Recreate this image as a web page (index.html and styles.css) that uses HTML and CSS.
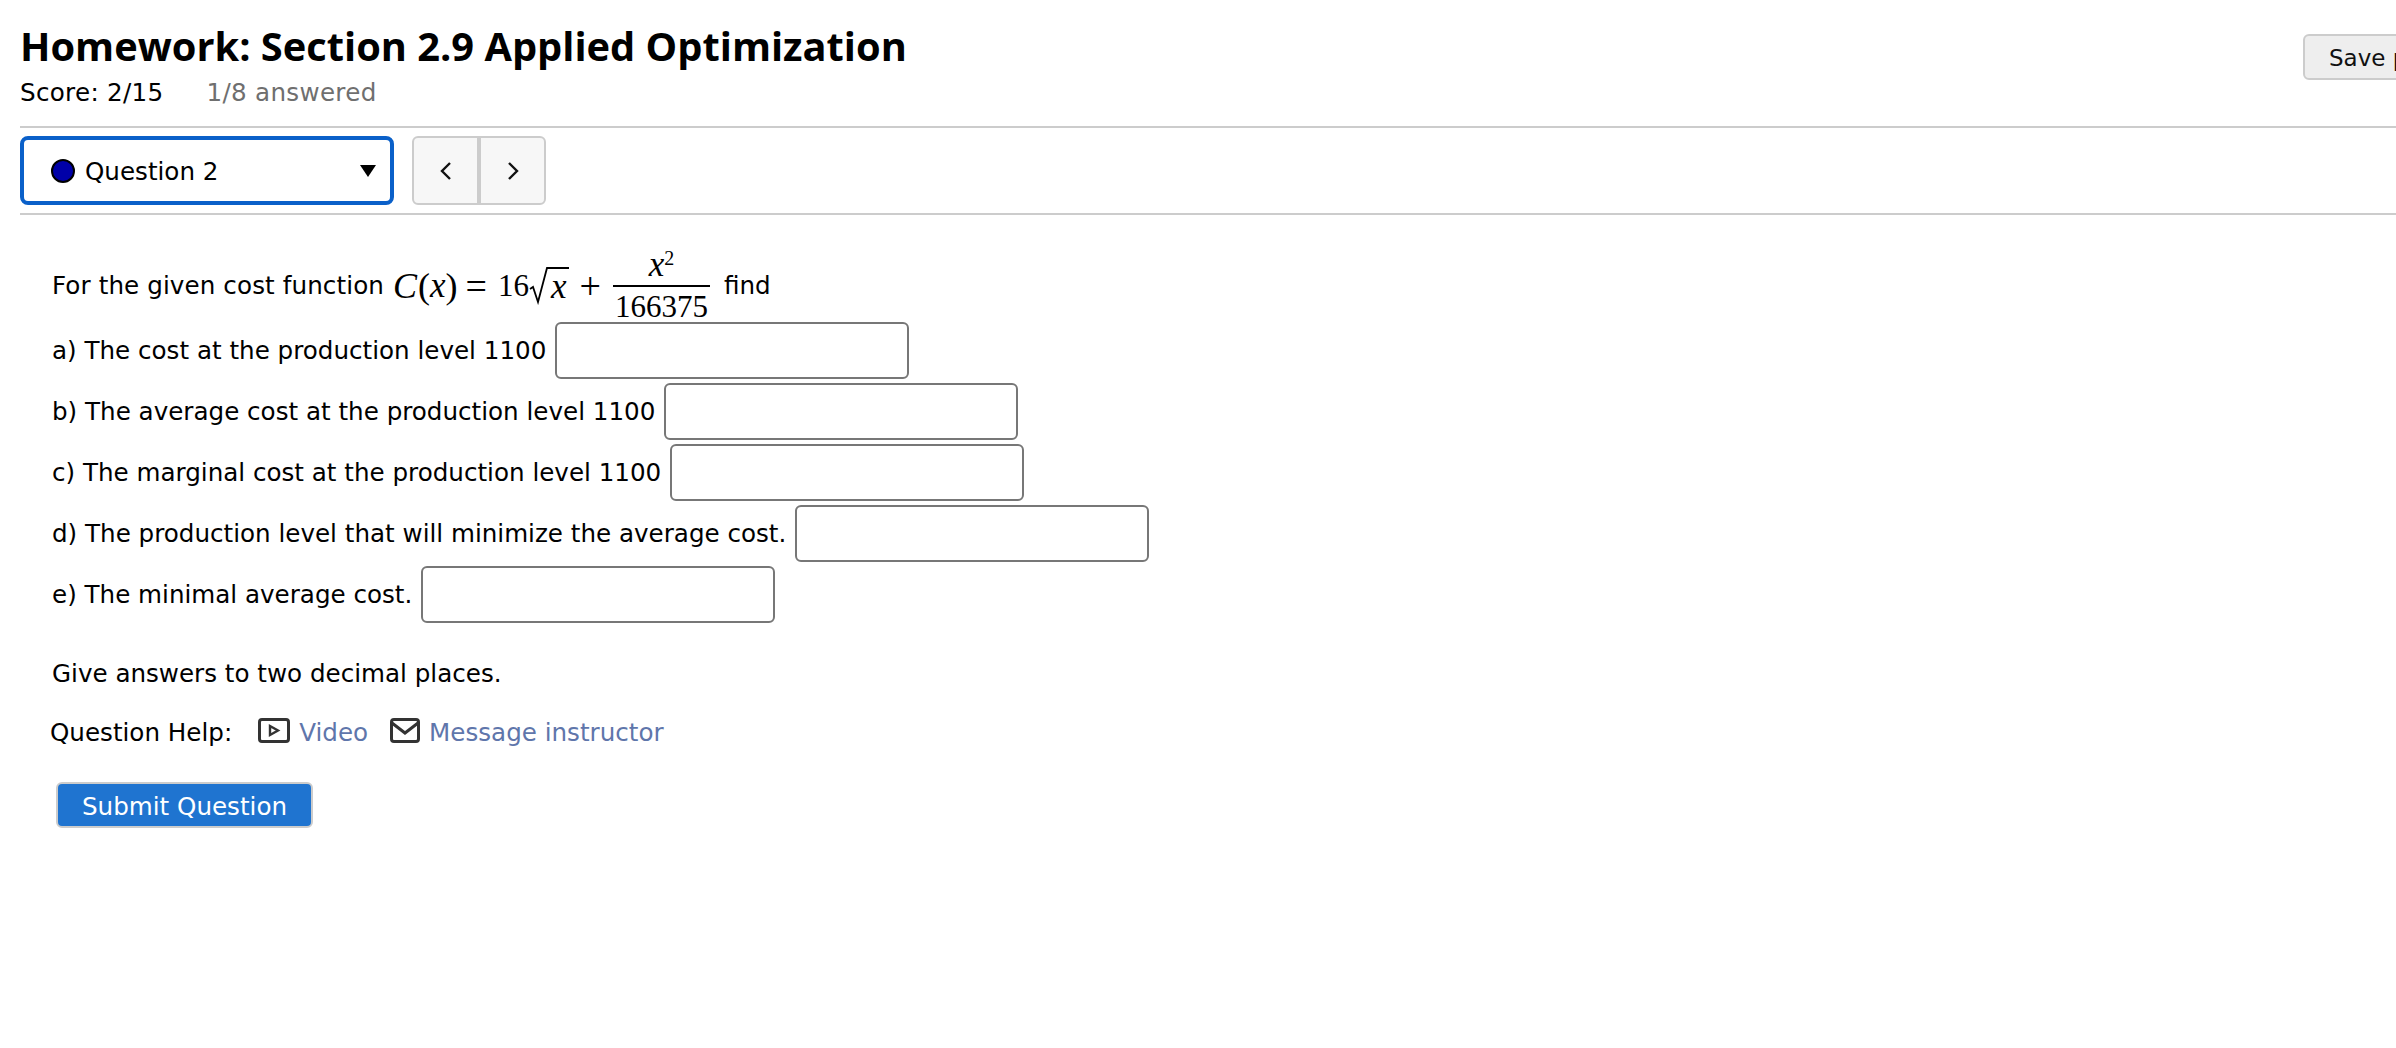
FILE: index.html
```html
<!DOCTYPE html>
<html lang="en">

<head>
    <meta charset="UTF-8">
    <title>Homework: Section 2.9 Applied Optimization</title>
    <link rel="stylesheet" href="styles.css">
</head>

<body>
    <div class="page">
        <div class="header">
            <div class="header-left">
                <h1 class="title">Homework: Section 2.9 Applied Optimization</h1>
                <div class="score"><span>Score: 2/15</span><span class="answered">1/8 answered</span></div>
            </div>
            <button class="save-btn">Save progress</button>
        </div>

        <div class="nav-bar">
            <div class="question-select">
                <span class="dot"></span>
                <span class="question-name">Question 2</span>
                <span class="caret"></span>
            </div>
            <div class="pager">
                <button class="pager-btn">
                    <svg width="14" height="22" viewBox="0 0 14 22"><path d="M11 3 L3 11 L11 19" /></svg>
                </button>
                <button class="pager-btn">
                    <svg width="14" height="22" viewBox="0 0 14 22"><path d="M3 3 L11 11 L3 19" /></svg>
                </button>
            </div>
        </div>

        <div class="question">
            <div class="intro">
                <span class="intro-text">For the given cost function</span>
                <span class="math">
                    <i class="var-c">C</i><span class="paren">(</span><i class="var-x">x</i><span class="paren">)</span><span class="rel">=</span>16<span class="sqrt"><svg class="radical" width="20" height="38" viewBox="0 0 20 38"><path d="M1 22 L4 20 L9 35 L18 1 L20 1" /></svg><i class="radicand">x</i></span><span class="rel plus">+</span><span class="frac"><span class="num"><i class="var-x">x</i><sup>2</sup></span><span class="den">166375</span></span>
                </span>
                <span class="find">find</span>
            </div>
            <div class="part"><span>a) The cost at the production level 1100</span><input class="answer" type="text"></div>
            <div class="part"><span>b) The average cost at the production level 1100</span><input class="answer" type="text"></div>
            <div class="part"><span>c) The marginal cost at the production level 1100</span><input class="answer" type="text"></div>
            <div class="part"><span>d) The production level that will minimize the average cost.</span><input class="answer" type="text"></div>
            <div class="part"><span>e) The minimal average cost.</span><input class="answer" type="text"></div>

            <p class="note">Give answers to two decimal places.</p>

            <div class="help">
                <span class="help-label">Question Help:</span>
                <a href="javascript:;" class="help-link">
                    <svg width="32" height="25" viewBox="0 0 32 25"><rect x="1.5" y="1.5" width="29" height="22" rx="2.5" /><path class="play" d="M12 8 L20 12.5 L12 17 Z" /></svg>
                    Video
                </a>
                <a href="javascript:;" class="help-link">
                    <svg width="30" height="25" viewBox="0 0 30 25"><rect x="1.5" y="1.5" width="27" height="22" rx="2.5" /><path d="M2 5 L15 15 L28 5" /></svg>
                    Message instructor
                </a>
            </div>

            <button class="submit-btn">Submit Question</button>
        </div>
    </div>
</body>

</html>
```

FILE: styles.css
```css
* {
    padding: 0;
    margin: 0;
    box-sizing: border-box;
}

html,
body {
    height: 100%;
    overflow: hidden;
    background: #fff;
}

body {
    font-family: "DejaVu Sans", sans-serif;
    font-size: 24.6px;
    color: #000;
}

.page {
    padding: 0 0 0 20px;
}

.header {
    display: flex;
    justify-content: space-between;
    height: 126px;
}

.title {
    padding-top: 20px;
    font-family: "Open Sans", sans-serif;
    font-size: 39.8px;
    line-height: 52px;
    font-weight: 700;
}

.score {
    display: flex;
    gap: 43px;
    margin-top: 5px;
    line-height: 32px;
    letter-spacing: 0.3px;
}

.answered {
    color: #6f6f6f;
}

.save-btn {
    flex-shrink: 0;
    width: 200px;
    height: 46px;
    margin-top: 34px;
    margin-right: -107px;
    padding: 2px 0 0 24px;
    text-align: left;
    font: inherit;
    font-size: 23px;
    color: #111;
    background: #eee;
    border: 2px solid #ccc;
    border-radius: 6px;
}

.nav-bar {
    display: flex;
    gap: 18px;
    height: 89px;
    padding-top: 8px;
    border-top: 2px solid #ccc;
    border-bottom: 2px solid #ccc;
}

.question-select {
    display: flex;
    align-items: center;
    width: 374px;
    height: 69px;
    padding: 0 14px 0 27px;
    border: 4px solid #0a60c9;
    border-radius: 8px;
}

.dot {
    width: 24px;
    height: 24px;
    border-radius: 50%;
    background: #0000a8;
    border: 2px solid #000;
}

.question-name {
    flex: 1;
    margin: 2px 0 0 10px;
}

.caret {
    width: 0;
    height: 0;
    border-left: 8px solid transparent;
    border-right: 8px solid transparent;
    border-top: 12px solid #000;
}

.pager {
    display: flex;
    height: 69px;
}

.pager-btn {
    display: flex;
    align-items: center;
    justify-content: center;
    width: 67px;
    background: #f7f7f7;
    border: 2px solid #ccc;
}

.pager-btn:first-child {
    border-radius: 6px 0 0 6px;
}

.pager-btn:last-child {
    border-radius: 0 6px 6px 0;
}

.pager-btn path {
    fill: none;
    stroke: #111;
    stroke-width: 2.4;
}

.question {
    padding: 34px 0 0 32px;
}

.intro {
    display: flex;
    align-items: center;
    gap: 9px;
    height: 73px;
}

.intro-text {
    letter-spacing: 0.1px;
}

.math {
    display: inline-flex;
    align-items: center;
    font-family: "Liberation Serif", serif;
    font-size: 31px;
}

.var-c {
    font-size: 36px;
    margin-right: 1px;
}

.var-x {
    font-size: 35px;
}

.paren {
    font-size: 36px;
}

.rel {
    margin: 0 11px 0 8px;
    font-size: 38px;
}

.plus {
    margin: 0 12px 0 11px;
}

.sqrt {
    display: inline-flex;
    align-items: flex-start;
}

.radical {
    margin-top: 1px;
}

.radical path {
    fill: none;
    stroke: #000;
    stroke-width: 1.8;
}

.radicand {
    font-size: 35px;
    border-top: 2px solid #000;
    line-height: 36px;
    padding: 0 2px;
    margin-top: 1px;
}

.frac {
    display: inline-flex;
    flex-direction: column;
    align-items: center;
    width: 97px;
}

.num {
    width: 100%;
    text-align: center;
    border-bottom: 2px solid #000;
    height: 42px;
    line-height: 40px;
}

.num sup {
    font-size: 20px;
    line-height: 0;
}

.den {
    height: 40px;
    line-height: 40px;
}

.find {
    margin-left: 5px;
}

.part {
    display: flex;
    align-items: center;
    gap: 9px;
    height: 57px;
    margin-bottom: 4px;
}

.answer {
    width: 354px;
    height: 57px;
    background: #fff;
    border: 2px solid #777;
    border-radius: 6px;
}

.note {
    margin-top: 35px;
    line-height: 32px;
}

.help {
    display: flex;
    align-items: center;
    margin-top: 27px;
    margin-left: -2px;
    line-height: 32px;
}

.help-label {
    margin-right: 26px;
}

.help-link {
    display: flex;
    align-items: center;
    gap: 9px;
    margin-right: 22px;
    color: #5f76ab;
    text-decoration: none;
}

.help-link svg {
    margin-top: -5px;
}

.help-link rect,
.help-link path {
    fill: none;
    stroke: #333;
    stroke-width: 3;
}

.help-link .play {
    stroke-width: 2.4;
}

.submit-btn {
    display: block;
    width: 257px;
    height: 46px;
    margin: 33px 0 0 4px;
    padding-top: 2px;
    font: inherit;
    color: #fff;
    background: #1f74d0;
    border: 2px solid #ccc;
    border-radius: 6px;
}
```
